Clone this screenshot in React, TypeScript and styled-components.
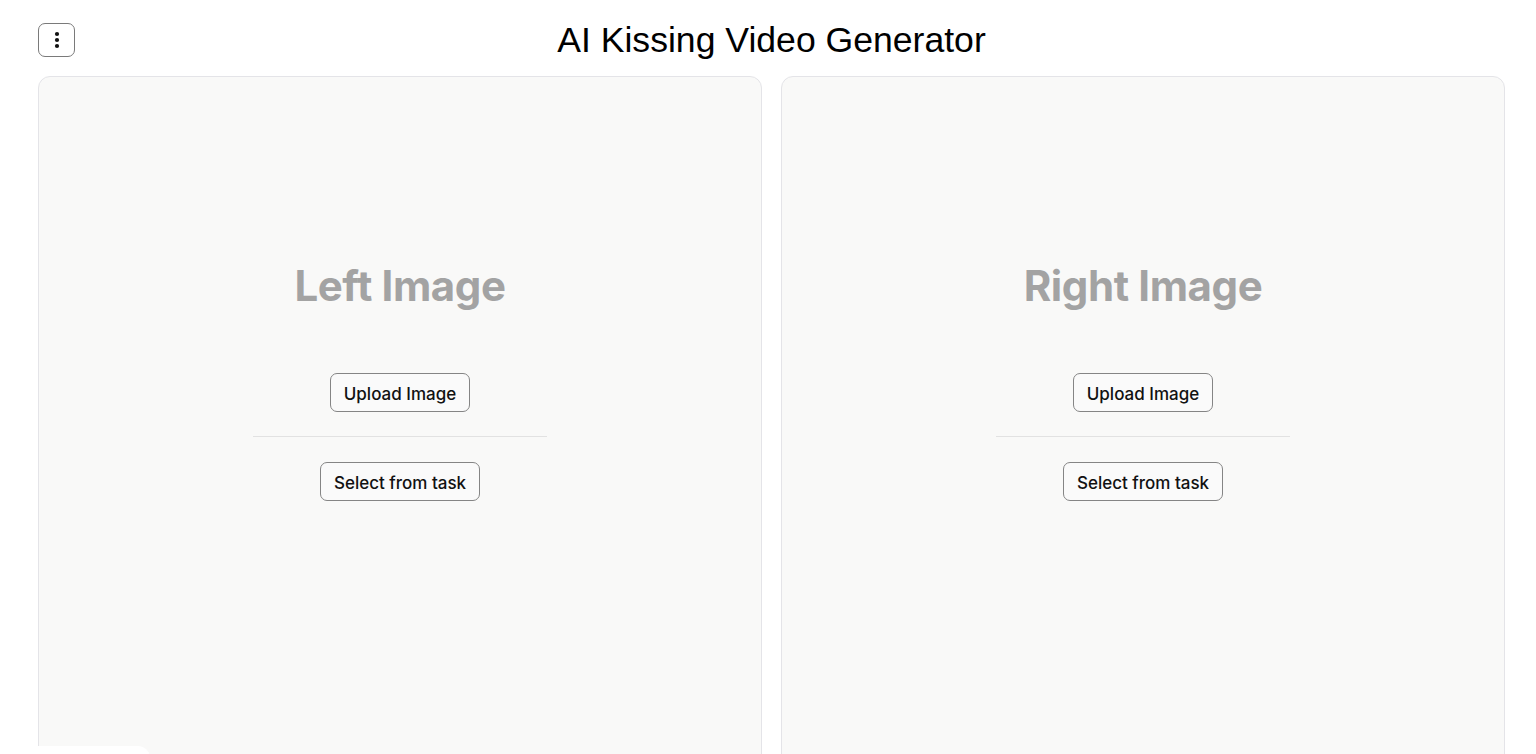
import React from "react";
import styled, { createGlobalStyle } from "styled-components";

const Global = createGlobalStyle`
  html, body { margin: 0; padding: 0; background: #ffffff; overflow: hidden; }
  body { font-family: Inter, "Liberation Sans", Arial, sans-serif; color: #111; }
`;

const Page = styled.div`
  position: relative;
  padding: 18px 31px 0 38px;
  height: 754px;
  box-sizing: border-box;
  overflow: hidden;
`;

const Header = styled.header`
  display: grid;
  grid-template-columns: 1fr auto 1fr;
  align-items: center;
  height: 44px;
`;

const MenuButton = styled.button`
  justify-self: start;
  width: 37px;
  height: 34px;
  display: flex;
  align-items: center;
  justify-content: center;
  background: #fff;
  border: 1.5px solid #7a7a7a;
  border-radius: 7px;
  padding: 0;
  cursor: pointer;
`;

const Title = styled.h1`
  margin: 0;
  font-family: "Liberation Sans", Arial, Helvetica, sans-serif;
  font-weight: 400;
  font-size: 35.6px;
  line-height: 44px;
  color: #000;
  white-space: nowrap;
`;

const Panels = styled.main`
  display: grid;
  grid-template-columns: 1fr 1fr;
  gap: 19px;
  margin-top: 14px;
`;

const Panel = styled.section`
  background: #f9f9f8;
  border: 1px solid #e4e4e8;
  border-radius: 12px;
  height: 760px;
  display: flex;
  flex-direction: column;
  align-items: center;
  padding-top: 182px;
  box-sizing: border-box;
`;

const PanelTitle = styled.h2`
  margin: 0;
  font-family: Inter, "Liberation Sans", sans-serif;
  font-weight: 700;
  font-size: 42px;
  line-height: 53px;
  letter-spacing: -0.4px;
  color: #a3a3a3;
`;

const ActionButton = styled.button<{ $top: number }>`
  box-sizing: border-box;
  margin-top: ${(p) => p.$top}px;
  height: 39px;
  padding: 2px 13px 0;
  background: #fafafa;
  border: 1px solid #858585;
  border-radius: 7px;
  font-family: Inter, "Liberation Sans", sans-serif;
  font-weight: 500;
  font-size: 17px;
  line-height: 20px;
  color: #111;
  cursor: pointer;
`;

const Divider = styled.hr`
  width: 294px;
  margin: 24px 0 0;
  border: none;
  border-top: 1px solid #e2e2e2;
  height: 0;
`;

const Toast = styled.div`
  position: absolute;
  left: 38px;
  top: 746px;
  width: 112px;
  height: 24px;
  background: #ffffff;
  border-top-right-radius: 12px;
`;

const DotsIcon = () => (
  <svg width="6" height="18" viewBox="0 0 6 18" aria-hidden>
    <circle cx="3" cy="3" r="2.1" fill="#111" />
    <circle cx="3" cy="9" r="2.1" fill="#111" />
    <circle cx="3" cy="15" r="2.1" fill="#111" />
  </svg>
);

const ImagePanel = ({ label }: { label: string }) => (
  <Panel>
    <PanelTitle>{label}</PanelTitle>
    <ActionButton $top={61}>Upload Image</ActionButton>
    <Divider />
    <ActionButton $top={25}>Select from task</ActionButton>
  </Panel>
);

export default function App() {
  return (
    <>
      <Global />
      <Page>
        <Header>
          <MenuButton aria-label="Menu">
            <DotsIcon />
          </MenuButton>
          <Title>AI Kissing Video Generator</Title>
          <div />
        </Header>
        <Panels>
          <ImagePanel label="Left Image" />
          <ImagePanel label="Right Image" />
        </Panels>
        <Toast />
      </Page>
    </>
  );
}
